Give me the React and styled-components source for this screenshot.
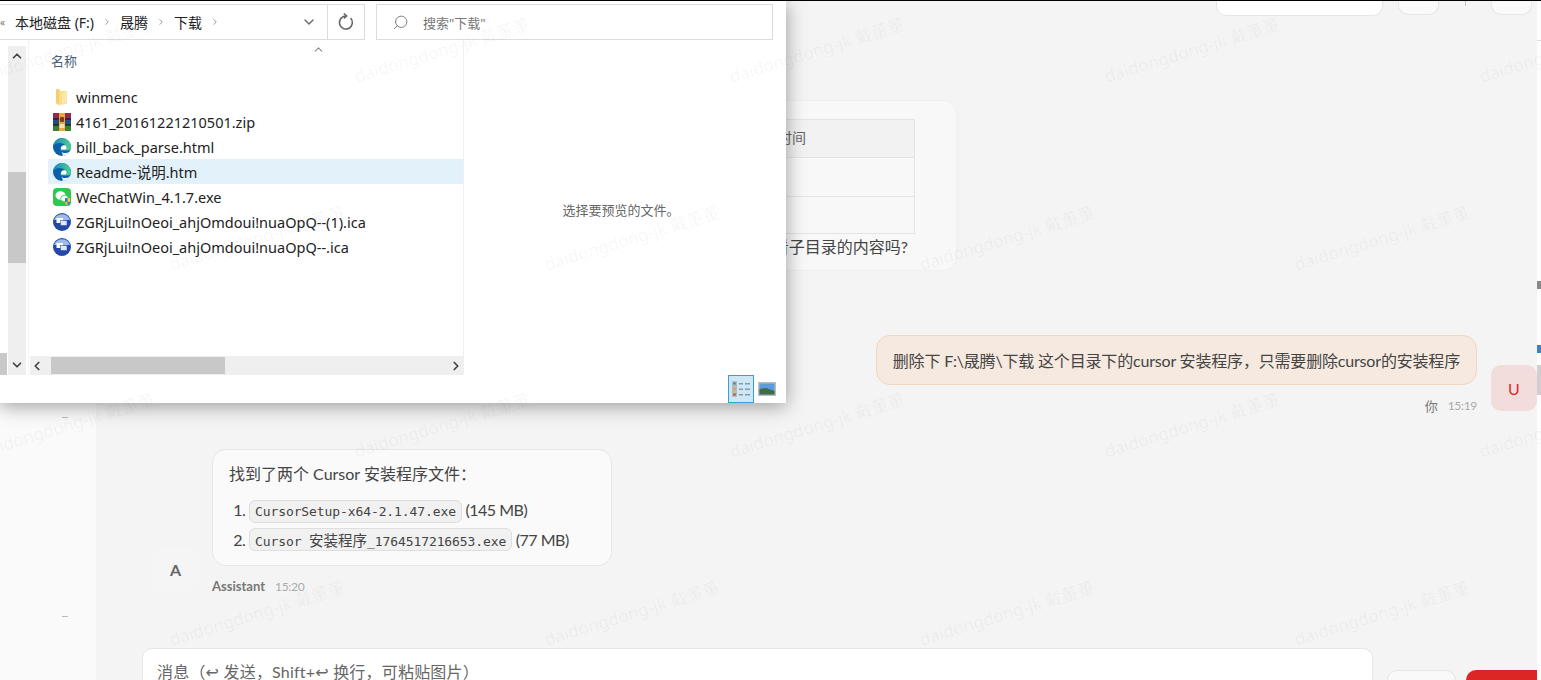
import React from 'react';
import styled, { createGlobalStyle } from 'styled-components';
import { ChevronDown, ChevronUp, ChevronLeft, ChevronRight, Search } from 'lucide-react';

const SANS = `"Noto Sans", "Noto Sans CJK SC", sans-serif`;
const CHAT = `Lato, "Noto Sans CJK SC", "DejaVu Sans", sans-serif`;

/* full-width punctuation kept as escapes so it can't get normalised */
const USER_TEXT = '删除下 F:\\晟腾\\下载 这个目录下的cursor 安装程序\uFF0C只需要删除cursor的安装程序';
const LEAD_TEXT = '找到了两个 Cursor 安装程序文件\uFF1A';
const PLACEHOLDER = '消息\uFF08↩ 发送\uFF0CShift+↩ 换行\uFF0C可粘贴图片\uFF09';

const GlobalStyle = createGlobalStyle`
  html, body { margin: 0; padding: 0; height: 100%; overflow: hidden; background: #f4f4f4; }
  body { font-family: ${SANS}; color: #333; }
  * { box-sizing: border-box; }
`;

/* ── page shell ── */
const Screen = styled.div`
  position: relative;
  width: 1541px;
  height: 680px;
  overflow: hidden;
  display: flex;
  flex-direction: column;
  border-top: 1px solid #000;
`;

const Body = styled.div`
  flex: 1;
  min-height: 0;
  display: flex;
`;

const Sidebar = styled.aside`
  width: 96px;
  flex-shrink: 0;
  background: #fafafa;
  display: flex;
  flex-direction: column;
  align-items: flex-end;
  padding: 416px 28px 0 0;
  gap: 198px;
`;

const SideDash = styled.span`
  width: 6px;
  height: 1px;
  background: #bcbcbc;
`;

const Main = styled.main`
  flex: 1;
  min-width: 0;
  background: #f4f4f4;
  font-family: ${CHAT};
  display: flex;
  flex-direction: column;
`;

const EdgeStrip = styled.div`
  width: 4px;
  flex-shrink: 0;
  background: #fdfdfd;
  display: flex;
  flex-direction: column;
`;

const StripMark = styled.span`
  height: ${({ $h }) => $h}px;
  margin-top: ${({ $top }) => $top}px;
  background: ${({ $color }) => $color};
`;

/* ── chat top bar (cut off by the screen edge) ── */
const TopBar = styled.div`
  height: 15px;
  display: flex;
  justify-content: flex-end;
  align-items: flex-start;
  padding-right: 5px;
`;

const TopField = styled.div`
  width: 167px;
  height: 15px;
  margin-right: 15px;
  background: #fff;
  border: 1px solid #e6e6e6;
  border-top: 0;
  border-radius: 0 0 10px 10px;
`;

const TopButton = styled.div`
  width: 41px;
  height: 14px;
  background: #fafafa;
  border: 1px solid #e6e6e6;
  border-top: 0;
  border-radius: 0 0 10px 10px;
`;

const TopTick = styled.span`
  width: 1px;
  height: 5px;
  margin: 0 25px 0 26px;
  background: #b9c6d6;
`;

/* ── messages ── */
const Messages = styled.div`
  flex: 1;
  min-height: 0;
  display: flex;
  flex-direction: column;
`;

const AssistantRow = styled.div`
  display: flex;
  align-items: flex-end;
  gap: 14px;
  padding-left: 57px;
  margin-top: ${({ $top }) => $top}px;
`;

const UserRow = styled.div`
  display: flex;
  justify-content: flex-end;
  align-items: flex-end;
  gap: 14px;
  margin-top: ${({ $top }) => $top}px;
`;

const Column = styled.div`
  display: flex;
  flex-direction: column;
  align-items: ${({ $end }) => ($end ? 'flex-end' : 'flex-start')};
`;

const Avatar = styled.div`
  width: ${({ $user }) => ($user ? 46 : 45)}px;
  height: ${({ $user }) => ($user ? 46 : 45)}px;
  border-radius: 10px;
  display: flex;
  align-items: center;
  justify-content: center;
  font-size: 16px;
  background: ${({ $user }) => ($user ? '#f3dcdc' : '#f5f5f5')};
  color: ${({ $user }) => ($user ? '#d92b2b' : '#666')};
  font-weight: ${({ $user }) => ($user ? 400 : 700)};
  margin-bottom: 2px;
`;

const UserBubble = styled.div`
  height: 50px;
  padding: 0 16px;
  display: flex;
  align-items: center;
  font-size: 16px;
  letter-spacing: -0.18px;
  color: #444;
  background: #f6e9df;
  border: 1px solid #f2d6c0;
  border-radius: 14px;
  white-space: nowrap;
`;

const Card = styled.div`
  width: ${({ $w }) => $w}px;
  padding: 14px 16px 10px;
  background: #fafafa;
  border: 1px solid #e9e5e5;
  border-radius: 14px;
  font-size: 16px;
  color: #444;
`;

const WideCard = styled(Card)`
  height: 171px;
  padding: 18px 41px 0 16px;
  background: #f8f8f8;
  border-color: #efefef;
`;

const Table = styled.div`
  display: grid;
  grid-template-rows: 37px 39px 37px;
  border: 1px solid #e4e4e4;
  font-size: 14px;
  color: #666;
`;

const TableCell = styled.div`
  display: flex;
  align-items: center;
  justify-content: flex-end;
  padding: 0 108px 3px 0;
  background: ${({ $head }) => ($head ? '#f2f2f2' : 'transparent')};
  border-top: ${({ $head }) => ($head ? '0' : '1px solid #e4e4e4')};
`;

const TableTail = styled.p`
  margin: 1px 0 0;
  text-align: right;
  padding-right: 7px;
  line-height: 24px;
`;

const CardLead = styled.p`
  margin: 0 0 11px;
  line-height: 20px;
`;

const FileList = styled.ol`
  margin: 0;
  padding: 0 0 0 20px;
`;

const FileItem = styled.li`
  height: 30px;
  line-height: 30px;
  letter-spacing: -0.5px;
`;

const Code = styled.code`
  display: inline-block;
  height: 23px;
  line-height: 21px;
  padding: 0 5px;
  font-family: "DejaVu Sans Mono", "Noto Sans CJK SC", monospace;
  font-size: 13px;
  letter-spacing: -0.1px;
  color: #444;
  background: #f1f1f1;
  border: 1px solid #dedede;
  border-radius: 6px;
`;

const CodeCjk = styled.span`
  font-family: "Noto Sans CJK SC", sans-serif;
  font-size: 14.5px;
  letter-spacing: 0;
`;

const Meta = styled.div`
  display: flex;
  align-items: center;
  gap: 10px;
  margin-top: ${({ $top }) => $top}px;
  height: 16px;
  color: #777;
`;

const MetaName = styled.span`
  font-size: 13px;
  font-weight: ${({ $bold }) => ($bold ? 700 : 400)};
`;

const MetaTime = styled.span`
  font-size: 12px;
  letter-spacing: -0.3px;
  color: #aaa;
`;

/* ── composer ── */
const Composer = styled.div`
  flex-shrink: 0;
  height: 32px;
  display: flex;
  align-items: flex-start;
  padding-left: 46px;
`;

const MessageInput = styled.div`
  width: 1231px;
  height: 60px;
  flex-shrink: 0;
  padding: 12px 14px;
  background: #fff;
  border: 1px solid #e6e6e6;
  border-radius: 10px;
  font-size: 16px;
  letter-spacing: 0.2px;
  line-height: 22px;
  color: #666;
  white-space: nowrap;
`;

const AttachButton = styled.div`
  width: 69px;
  height: 40px;
  margin: 22px 0 0 14px;
  flex-shrink: 0;
  background: #f9f9f9;
  border: 1px solid #e6e6e6;
  border-radius: 10px;
`;

const SendButton = styled.div`
  width: 71px;
  height: 40px;
  margin: 22px 0 0 10px;
  flex-shrink: 0;
  background: #dc2626;
  border-radius: 10px 0 0 0;
`;

/* ── explorer window over the chat ── */
const ExplorerWindow = styled.section`
  position: absolute;
  left: 0;
  top: 0;
  width: 786px;
  height: 402px;
  background: #fff;
  box-shadow: 0 3px 18px rgba(0, 0, 0, 0.38);
  display: flex;
  flex-direction: column;
  font-size: 14.5px;
  color: #222;
`;

const AddressRow = styled.div`
  height: 39px;
  flex-shrink: 0;
  padding: 3px 13px 0 0;
  display: flex;
  gap: 11px;
`;

const AddressBox = styled.div`
  width: 365px;
  height: 36px;
  flex-shrink: 0;
  border: 1px solid #dcdcdc;
  border-left: 0;
  display: flex;
  align-items: center;
`;

const Crumbs = styled.div`
  flex: 1;
  display: flex;
  align-items: center;
  gap: 8px;
  font-size: 14px;
`;

const Overflow = styled.span`
  font-size: 10px;
  color: #777;
  width: 5px;
  margin-right: 2px;
  overflow: hidden;
`;

const AddressTool = styled.div`
  width: 37px;
  height: 100%;
  display: flex;
  align-items: center;
  justify-content: center;
  color: #666;
  border-left: ${({ $split }) => ($split ? '1px solid #dcdcdc' : '0')};
`;

const SearchBox = styled.div`
  flex: 1;
  height: 36px;
  display: flex;
  align-items: center;
  gap: 14px;
  padding-left: 15px;
  border: 1px solid #dcdcdc;
  font-size: 13px;
  color: #777;
`;

const FlippedSearch = styled(Search)`
  transform: scaleX(-1);
  color: #777;
`;

const ExplorerBody = styled.div`
  flex: 1;
  min-height: 0;
  display: flex;
`;

const NavStub = styled.div`
  width: 8px;
  flex-shrink: 0;
  display: flex;
  align-items: flex-end;
`;

const NavThumb = styled.div`
  width: 7px;
  height: 22px;
  background: #c8c8c8;
`;

const VScroll = styled.div`
  width: 18px;
  margin-top: 6px;
  padding-top: 3px;
  flex-shrink: 0;
  background: #efefef;
  display: flex;
  flex-direction: column;
  align-items: center;
  color: #444;
`;

const VThumb = styled.div`
  width: 100%;
  height: 91px;
  flex-shrink: 0;
  margin: 109px 0 95px;
  background: #c8c8c8;
`;

const ListPane = styled.div`
  width: 436px;
  flex-shrink: 0;
  margin-left: 2px;
  border-left: 1px solid #f3f3f3;
  border-right: 1px solid #f0f0f0;
  position: relative;
  display: flex;
  flex-direction: column;
`;

const SortMark = styled(ChevronUp)`
  position: absolute;
  left: 283px;
  top: 3px;
  color: #888;
`;

const ColumnHead = styled.div`
  height: 44px;
  padding: 11px 0 0 22px;
  font-size: 13px;
  color: #4c607a;
  flex-shrink: 0;
`;

const Rows = styled.div`
  flex: 1;
  display: flex;
  flex-direction: column;
  padding-left: 19px;
`;

const Row = styled.div`
  height: 25px;
  display: flex;
  align-items: center;
  gap: 5px;
  padding-left: 5px;
  white-space: nowrap;
  background: ${({ $selected }) => ($selected ? '#e3f1fb' : 'transparent')};
`;

const HScroll = styled.div`
  height: 19px;
  margin-left: 1px;
  flex-shrink: 0;
  background: #efefef;
  display: flex;
  align-items: center;
  justify-content: space-between;
  position: relative;
  color: #444;
`;

const HThumb = styled.div`
  position: absolute;
  left: 21px;
  top: 1px;
  bottom: 1px;
  width: 174px;
  background: #c8c8c8;
`;

const PreviewPane = styled.div`
  flex: 1;
  display: flex;
  align-items: center;
  justify-content: center;
  padding: 4px 8px 0 0;
  font-size: 13px;
  color: #666;
`;

const StatusRow = styled.div`
  height: 28px;
  flex-shrink: 0;
  display: flex;
  justify-content: flex-end;
  align-items: stretch;
  padding-right: 10px;
  gap: 4px;
`;

const ViewButton = styled.div`
  width: ${({ $active }) => ($active ? 26 : 18)}px;
  display: flex;
  align-items: center;
  justify-content: center;
  background: ${({ $active }) => ($active ? '#cce8f7' : 'transparent')};
  border: ${({ $active }) => ($active ? '1px solid #3a9fd8' : '0')};
`;

/* ── watermark over everything ── */
const WatermarkLayer = styled.div`
  position: absolute;
  inset: 0;
  pointer-events: none;
  overflow: hidden;
`;

const Mark = styled.span`
  position: absolute;
  left: ${({ $x }) => $x}px;
  top: ${({ $y }) => $y}px;
  transform: rotate(-17deg);
  transform-origin: left center;
  font-size: 17px;
  line-height: 20px;
  white-space: nowrap;
  color: rgba(0, 0, 0, 0.045);
`;

/* ── icons ── */
const RefreshIcon = () => (
  <svg width="18" height="18" viewBox="0 0 18 18" fill="none" stroke="#666" strokeWidth="1.6">
    <path d="M13.6 5 A6.5 6.5 0 1 1 9 3" />
    <path d="M6.8 0.6 L9.6 3 L6.8 5.4" />
  </svg>
);

const FolderIcon = () => (
  <svg width="18" height="18" viewBox="0 0 18 18">
    <path d="M3 1.5 L7 1 L7 3 L14 3 L14 16 L5 17 L3 15 Z" fill="#f9dd8a" />
    <path d="M3 1.5 L6 1.5 L6 17 L3 15 Z" fill="#f5cf6a" />
    <path d="M9 4 L14 4 L14 15 L9 16 Z" fill="#fbe7a8" />
  </svg>
);

const RarIcon = () => (
  <svg width="18" height="18" viewBox="0 0 18 18">
    <rect x="0" y="0" width="18" height="6" fill="#8f2a55" />
    <rect x="0" y="6" width="18" height="6" fill="#1f4f80" />
    <rect x="0" y="12" width="18" height="6" fill="#3c7d34" />
    <rect x="0" y="5.4" width="18" height="1.2" fill="#1c1c1c" />
    <rect x="0" y="11.4" width="18" height="1.2" fill="#1c1c1c" />
    <rect x="6" y="0" width="6" height="18" fill="#e9a63a" />
    <rect x="7" y="4" width="4" height="5" rx="1" fill="#7a3f1c" />
    <rect x="6.5" y="11" width="5" height="4" fill="#f3e0b0" />
  </svg>
);

const EdgeIcon = () => (
  <svg width="18" height="18" viewBox="0 0 18 18">
    <defs>
      <linearGradient id="edgeFill" x1="0" y1="0.4" x2="1" y2="0.4">
        <stop offset="0" stopColor="#1a86c4" />
        <stop offset="1" stopColor="#4fd08c" />
      </linearGradient>
    </defs>
    <circle cx="9" cy="9" r="9" fill="#0b5ea8" />
    <path d="M0.2 8 C1 3 4.8 0 9 0 C14 0 18 4 18 9.5 C18 11.8 16 12.6 13.4 12.6 L8 12.6 C6.5 9.5 9 6 12.5 7.5 C9 4.2 3 4.2 0.2 8 Z" fill="url(#edgeFill)" />
    <path d="M8 11.5 C7.4 9 9.6 6.8 12.5 7.5 C13.8 8.6 14 10.4 13 11.5 Z" fill="#fff" />
    <path d="M7.8 12.2 C8.5 15 12 16 16.6 14 C15 16.6 12 18 9 18 C11 16.8 8.6 14.8 7.8 12.2 Z" fill="#e8f6ff" />
  </svg>
);

const WeChatIcon = () => (
  <svg width="18" height="18" viewBox="0 0 18 18">
    <rect width="18" height="18" rx="4" fill="#2dc84d" />
    <ellipse cx="7.5" cy="7.5" rx="5" ry="4.2" fill="#fff" />
    <ellipse cx="11.5" cy="10.5" rx="3.8" ry="3.2" fill="#fff" stroke="#2dc84d" strokeWidth="0.8" />
    <path d="M12 10 L17 10 L17 14 C17 16 15 17.5 14.5 18 C14 17.5 12 16 12 14 Z" fill="#3b78c9" />
    <path d="M14.5 10 L17 10 L17 14 L14.5 14 Z M12 14 L14.5 14 L14.5 18 C14 17.5 12 16 12 14 Z" fill="#f2c53d" />
  </svg>
);

const IcaIcon = () => (
  <svg width="18" height="18" viewBox="0 0 18 18">
    <circle cx="9" cy="9" r="9" fill="#2348a8" />
    <path d="M1 7 A8.5 8.5 0 0 1 17 7 Z" fill="#9dbcec" />
    <rect x="3.5" y="5" width="6.5" height="5" fill="#fff" />
    <rect x="7.5" y="7.5" width="6.5" height="5" fill="#dfe8f8" stroke="#2348a8" strokeWidth="0.5" />
  </svg>
);

const DetailsViewIcon = () => (
  <svg width="20" height="16" viewBox="0 0 20 16">
    <rect x="1" y="0" width="5" height="16" fill="#b9b9b9" />
    <rect x="2.5" y="1.5" width="2" height="2" fill="#2f6fb8" />
    <rect x="2.5" y="7" width="2" height="2" fill="#d8a23a" />
    <rect x="2.5" y="12.5" width="2" height="2" fill="#b83a2f" />
    <rect x="8" y="2" width="4" height="1.5" fill="#8a9aa5" />
    <rect x="14" y="2" width="5" height="1.5" fill="#8a9aa5" />
    <rect x="8" y="7.5" width="4" height="1.5" fill="#8a9aa5" />
    <rect x="14" y="7.5" width="5" height="1.5" fill="#8a9aa5" />
    <rect x="8" y="13" width="4" height="1.5" fill="#8a9aa5" />
    <rect x="14" y="13" width="5" height="1.5" fill="#8a9aa5" />
  </svg>
);

const PreviewViewIcon = () => (
  <svg width="18" height="14" viewBox="0 0 18 14">
    <rect width="18" height="14" fill="#bdbdbd" />
    <rect x="1.5" y="1.5" width="15" height="11" fill="#5c9bdc" />
    <path d="M1.5 7 L8 6 L16.5 9 L16.5 12.5 L1.5 12.5 Z" fill="#3f6b4a" />
  </svg>
);

const FILES = [
  { name: 'winmenc', Icon: FolderIcon },
  { name: '4161_20161221210501.zip', Icon: RarIcon },
  { name: 'bill_back_parse.html', Icon: EdgeIcon },
  { name: 'Readme-说明.htm', Icon: EdgeIcon, selected: true },
  { name: 'WeChatWin_4.1.7.exe', Icon: WeChatIcon },
  { name: 'ZGRjLui!nOeoi_ahjOmdoui!nuaOpQ--(1).ica', Icon: IcaIcon },
  { name: 'ZGRjLui!nOeoi_ahjOmdoui!nuaOpQ--.ica', Icon: IcaIcon },
];

const CRUMBS = ['本地磁盘 (F:)', '晟腾', '下载'];

const MARKS = [
  [-20, 66], [355, 66], [730, 66], [1105, 66], [1480, 66],
  [170, 254], [545, 254], [920, 254], [1295, 254],
  [-20, 441], [355, 441], [730, 441], [1105, 441], [1480, 441],
  [170, 629], [545, 629], [920, 629], [1295, 629],
];

function Explorer() {
  return (
    <ExplorerWindow>
      <AddressRow>
        <AddressBox>
          <Crumbs>
            <Overflow>«</Overflow>
            {CRUMBS.map((c) => (
              <React.Fragment key={c}>
                <span>{c}</span>
                <ChevronRight size={10} color="#888" />
              </React.Fragment>
            ))}
          </Crumbs>
          <AddressTool><ChevronDown size={16} /></AddressTool>
          <AddressTool $split><RefreshIcon /></AddressTool>
        </AddressBox>
        <SearchBox>
          <FlippedSearch size={17} strokeWidth={1.3} />
          <span>搜索"下载"</span>
        </SearchBox>
      </AddressRow>

      <ExplorerBody>
        <NavStub><NavThumb /></NavStub>
        <VScroll>
          <ChevronUp size={14} strokeWidth={3} />
          <VThumb />
          <ChevronDown size={14} strokeWidth={3} />
        </VScroll>
        <ListPane>
          <SortMark size={13} />
          <ColumnHead>名称</ColumnHead>
          <Rows>
            {FILES.map(({ name, Icon, selected }) => (
              <Row key={name} $selected={selected}>
                <Icon />
                <span>{name}</span>
              </Row>
            ))}
          </Rows>
          <HScroll>
            <ChevronLeft size={14} strokeWidth={3} />
            <HThumb />
            <ChevronRight size={14} strokeWidth={3} />
          </HScroll>
        </ListPane>
        <PreviewPane>选择要预览的文件。</PreviewPane>
      </ExplorerBody>

      <StatusRow>
        <ViewButton $active><DetailsViewIcon /></ViewButton>
        <ViewButton><PreviewViewIcon /></ViewButton>
      </StatusRow>
    </ExplorerWindow>
  );
}

export default function App() {
  return (
    <>
      <GlobalStyle />
      <Screen>
        <Body>
          <Sidebar>
            <SideDash />
            <SideDash />
          </Sidebar>
          <Main>
            <TopBar>
              <TopField />
              <TopButton />
              <TopTick />
              <TopButton />
            </TopBar>
            <Messages>
              <AssistantRow $top={84}>
                <Avatar>A</Avatar>
                <Column>
                  <WideCard $w={745}>
                    <Table>
                      <TableCell $head>修改时间</TableCell>
                      <TableCell />
                      <TableCell />
                    </Table>
                    <TableTail>查看子目录的内容吗?</TableTail>
                  </WideCard>
                  <Meta $top={7}>
                    <MetaName $bold>Assistant</MetaName>
                    <MetaTime>15:18</MetaTime>
                  </Meta>
                </Column>
              </AssistantRow>

              <UserRow $top={41}>
                <Column $end>
                  <UserBubble>{USER_TEXT}</UserBubble>
                  <Meta $top={12}>
                    <MetaName>你</MetaName>
                    <MetaTime>15:19</MetaTime>
                  </Meta>
                </Column>
                <Avatar $user>U</Avatar>
              </UserRow>

              <AssistantRow $top={36}>
                <Avatar>A</Avatar>
                <Column>
                  <Card $w={400}>
                    <CardLead>{LEAD_TEXT}</CardLead>
                    <FileList>
                      <FileItem><Code>CursorSetup-x64-2.1.47.exe</Code> (145 MB)</FileItem>
                      <FileItem><Code>Cursor <CodeCjk>安装程序</CodeCjk>_1764517216653.exe</Code> (77 MB)</FileItem>
                    </FileList>
                  </Card>
                  <Meta $top={12}>
                    <MetaName $bold>Assistant</MetaName>
                    <MetaTime>15:20</MetaTime>
                  </Meta>
                </Column>
              </AssistantRow>
            </Messages>
            <Composer>
              <MessageInput>{PLACEHOLDER}</MessageInput>
              <AttachButton />
              <SendButton />
            </Composer>
          </Main>
          <EdgeStrip>
            <StripMark $top={39} $h={1} $color="#dedede" />
            <StripMark $top={240} $h={8} $color="#888" />
            <StripMark $top={56} $h={8} $color="#3f7fc4" />
            <StripMark $top={12} $h={30} $color="#d0d0d0" />
          </EdgeStrip>
        </Body>
        <Explorer />
        <WatermarkLayer>
          {MARKS.map(([x, y]) => (
            <Mark key={`${x}-${y}`} $x={x} $y={y}>daidongdong-jk 戴董董</Mark>
          ))}
        </WatermarkLayer>
      </Screen>
    </>
  );
}
